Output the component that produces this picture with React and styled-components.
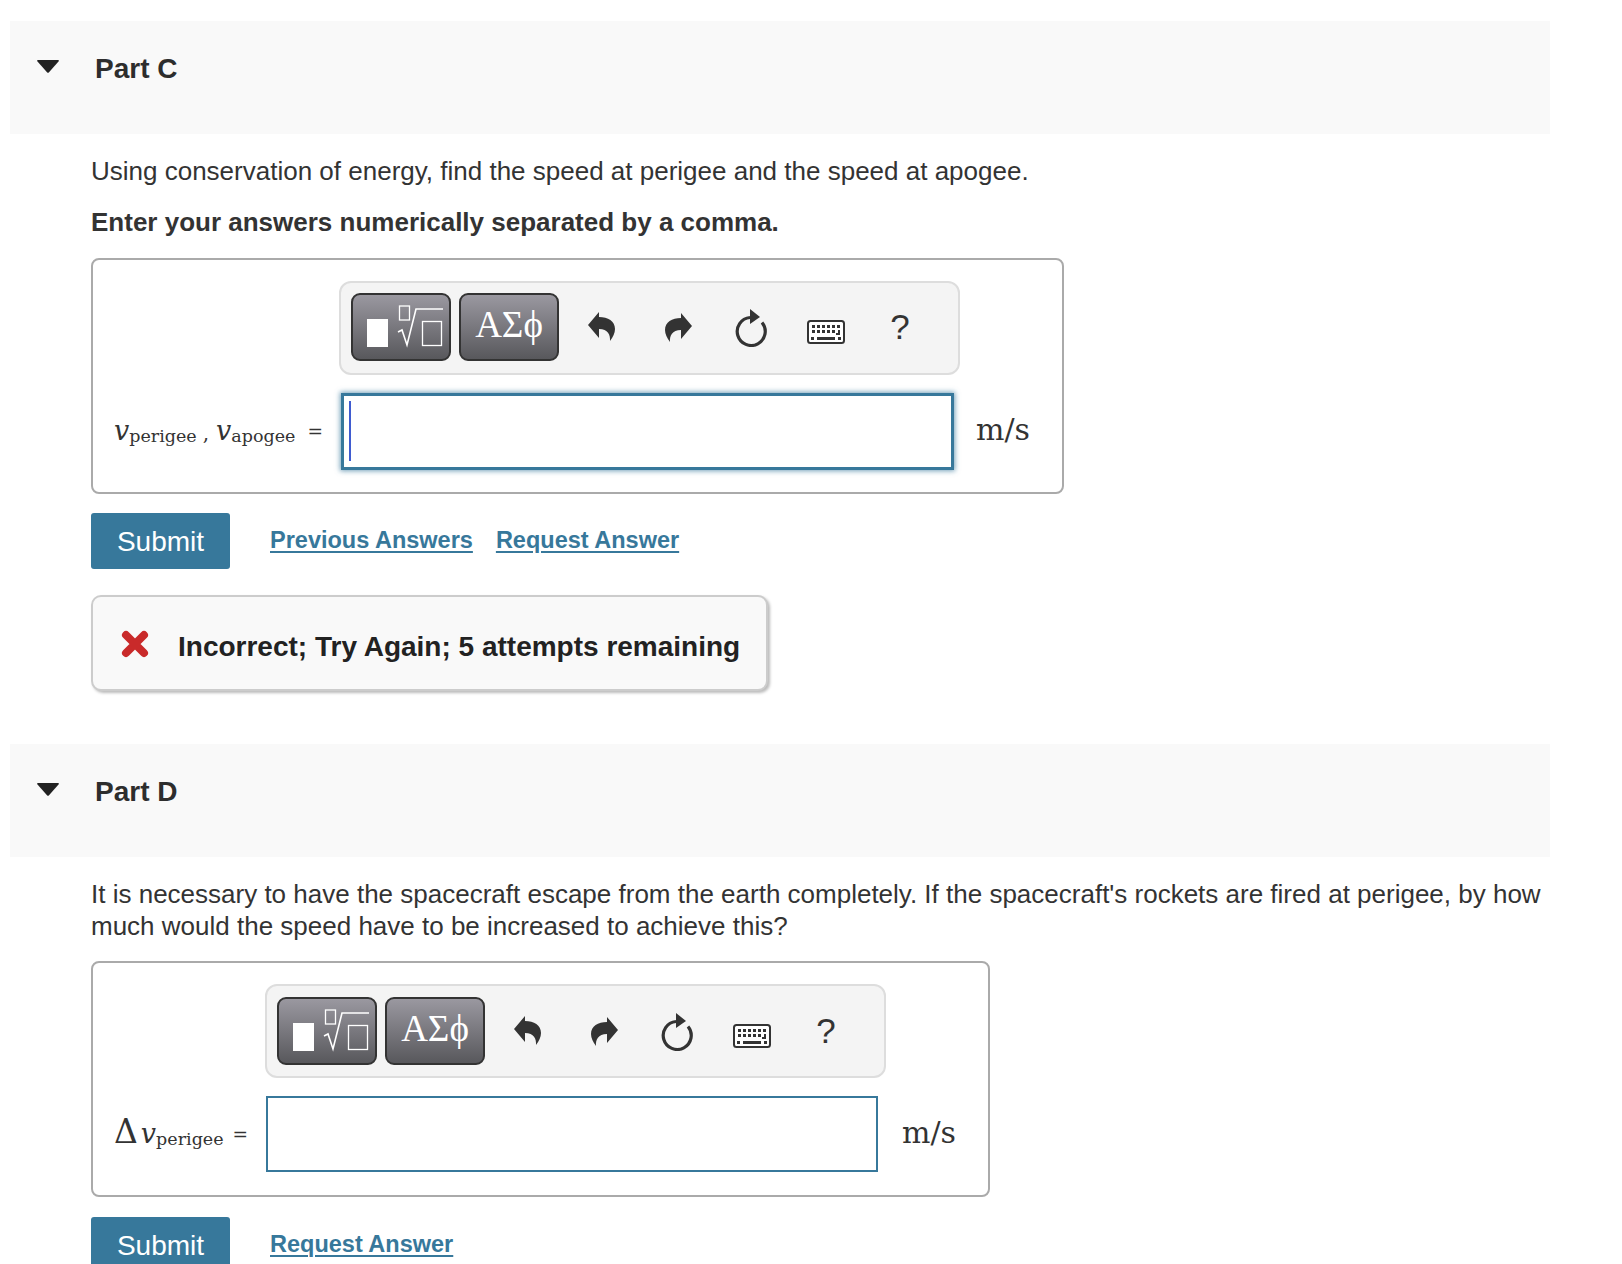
import React from 'react';
import styled, { createGlobalStyle } from 'styled-components';

const GlobalStyle = createGlobalStyle`
html, body {
  margin: 0;
  padding: 0;
  background: #fff;
  overflow: hidden;
}
body {
  font-family: 'Liberation Sans', Arial, sans-serif;
  color: #333;
}
`;

const Page = styled.div`
  width: 1540px;
  height: 1264px;
  margin-left: 10px;
  padding-top: 21px;
  box-sizing: border-box;
  overflow: hidden;
`;

const PartHeader = styled.div`
  display: flex;
  align-items: flex-start;
  height: 113px;
  background: #f9f9f9;
  box-sizing: border-box;
  padding: 32px 0 0 27px;
  margin-top: ${(p) => (p.$first ? '0' : '53px')};
`;

const CaretIcon = styled.svg`
  width: 22px;
  height: 13px;
  margin-top: 7px;
  fill: #222;
`;

const PartTitle = styled.h2`
  margin: 0 0 0 36px;
  font-size: 28px;
  line-height: 32px;
  font-weight: 700;
  color: #2d2d2d;
`;

const PartBody = styled.div`
  padding-left: 81px;
`;

const Prompt = styled.p`
  margin: 20.5px 0 0;
  font-size: 26px;
  line-height: 32px;
  color: #333;
`;

const Instruction = styled.p`
  margin: 20.5px 0 0;
  font-size: 26px;
  line-height: 31px;
  font-weight: 700;
  color: #333;
`;

const AnswerBox = styled.div`
  display: grid;
  grid-template-columns: ${(p) => p.$labelWidth}px ${(p) => p.$inputWidth}px auto;
  grid-template-rows: 94px 77px;
  row-gap: 18px;
  width: ${(p) => p.$width}px;
  height: 236px;
  margin-top: ${(p) => p.$top}px;
  box-sizing: border-box;
  border: 2px solid #aaa;
  border-radius: 8px;
  padding: 21px 0 0 21px;
`;

const Toolbar = styled.div`
  grid-column: 2 / 4;
  display: flex;
  align-items: center;
  width: 621px;
  height: 94px;
  margin-left: ${(p) => p.$offset}px;
  box-sizing: border-box;
  background: #f4f4f4;
  border: 2px solid #ddd;
  border-radius: 12px;
  padding: ${(p) => p.$drop}px 0 0 10px;
`;

const ToolButton = styled.div`
  display: flex;
  align-items: center;
  justify-content: center;
  width: 100px;
  height: 68px;
  margin-right: 8px;
  margin-bottom: 2px;
  box-sizing: border-box;
  border: 2px solid #333;
  border-radius: 9px;
  background: linear-gradient(#9a98a0, #58585c);
  color: #fff;
  font-family: 'Liberation Serif', serif;
  font-size: 37px;
  line-height: 1;
  padding-bottom: 6px;
  svg {
    margin: 6px 0 0 10px;
  }
`;

const IconSlot = styled.div`
  display: flex;
  align-items: center;
  justify-content: center;
  width: 74px;
  height: 68px;
  color: #333;
  font-size: 35px;
  padding-bottom: ${(p) => p.$lift || 0}px;
  padding-top: ${(p) => p.$drop || 0}px;
  padding-right: ${(p) => p.$nudge || 0}px;
  box-sizing: border-box;
  svg {
    display: block;
  }
`;

const MathLabel = styled.div`
  align-self: center;
  margin-top: ${(p) => p.$top}px;
  font-family: 'DejaVu Serif', serif;
  font-size: 18.5px;
  color: #333;
  white-space: nowrap;
`;

const MathVar = styled.i`
  font-size: 27px;
`;

const DeltaSign = styled.span`
  font-size: 33px;
  margin-right: 3px;
`;

const Subscript = styled.span`
  font-size: 17.5px;
  vertical-align: -2px;
`;

const Comma = styled.span`
  font-size: 20px;
  margin: 0 7px 0 6px;
`;

const Equals = styled.span`
  margin-left: ${(p) => p.$gap}px;
  vertical-align: 2px;
`;

const AnswerInput = styled.div`
  position: relative;
  height: ${(p) => (p.$focused ? '77px' : '76px')};
  box-sizing: border-box;
  background: #fff;
  border: ${(p) => (p.$focused ? '3px' : '2px')} solid #37789b;
  box-shadow: ${(p) => (p.$focused ? '0 0 5px 1px rgba(55, 120, 155, 0.7)' : 'none')};
`;

const Cursor = styled.span`
  position: absolute;
  left: 5px;
  top: 5px;
  width: 2px;
  height: 60px;
  background: #3f5bd0;
`;

const Unit = styled.div`
  align-self: center;
  margin: -4px 0 0 ${(p) => p.$gap}px;
  font-family: 'DejaVu Serif', serif;
  font-size: 30px;
  color: #333;
`;

const Actions = styled.div`
  display: flex;
  align-items: center;
  margin-top: ${(p) => p.$top}px;
`;

const SubmitButton = styled.button`
  width: 139px;
  height: 56px;
  border: 0;
  border-radius: 3px;
  background: #37789b;
  color: #fff;
  font-family: inherit;
  font-size: 28px;
  padding: 2px 0 0;
  margin-right: 16px;
`;

const ActionLink = styled.a`
  margin: 0 -1px 2px 24px;
  color: #37789b;
  font-size: 23.5px;
  font-weight: 700;
  text-decoration: underline;
  text-decoration-thickness: 2px;
  text-underline-offset: 3px;
`;

const Alert = styled.div`
  display: flex;
  align-items: center;
  width: 677px;
  height: 96px;
  margin-top: 26px;
  box-sizing: border-box;
  background: #f9f9f9;
  border: 2px solid #ccc;
  border-radius: 10px;
  box-shadow: 2px 2px 3px #bbb;
  padding-left: 28px;
`;

const AlertIcon = styled.svg`
  width: 28px;
  height: 28px;
  margin-top: 2px;
`;

const AlertText = styled.span`
  margin: 8px 0 0 29px;
  font-size: 28px;
  font-weight: 700;
  color: #222;
  white-space: nowrap;
`;

const Caret = () => (
  <CaretIcon viewBox="0 0 22 13">
    <path d="M1 0 H21 Q22.5 0 21.5 1.5 L12 12.2 Q11 13.2 10 12.2 L0.5 1.5 Q-0.5 0 1 0 Z" />
  </CaretIcon>
);

const MathIcon = () => (
  <svg width="78" height="44" viewBox="0 0 78 44">
    <rect x="0" y="14" width="21" height="28" fill="#fff" />
    <rect x="32.5" y="1" width="10" height="14" fill="none" stroke="#fff" strokeWidth="1.3" />
    <path d="M31 27 L35 25 L40 40 L49 4 H76" fill="none" stroke="#fff" strokeWidth="1.6" />
    <rect x="55.5" y="16.5" width="19" height="24" fill="none" stroke="#fff" strokeWidth="1.3" />
  </svg>
);

const ReplyIcon = styled.svg`
  transform: ${(p) => (p.$flip ? 'scaleX(-1)' : 'none')};
`;

const UndoIcon = ({ flip }) => (
  <ReplyIcon $flip={flip} width="28" height="31" viewBox="0 0 28 31" fill="#333">
    <path d="M0 14 L11 1 V6 C20 6 27 10 27 18 C27 22 25 26 22 30 C22.5 24 20 18 11 18 V27 Z" />
  </ReplyIcon>
);

const ResetIcon = () => (
  <svg width="34" height="38" viewBox="0 0 34 38">
    <path d="M27 13.5 A14 14 0 1 1 15 8.5" fill="none" stroke="#333" strokeWidth="3.2" />
    <path d="M15 0 L25 8 L15 15 Z" fill="#333" />
  </svg>
);

const keyRows = [
  [6, 11, 16, 21, 26, 31],
  [6, 11, 16, 21, 26],
];

const KeyboardIcon = () => (
  <svg width="38" height="24" viewBox="0 0 38 24">
    <rect x="1" y="1" width="36" height="22" rx="2.5" fill="#fff" stroke="#333" strokeWidth="2" />
    {keyRows.map((row, i) =>
      row.map((x) => <rect key={`${i}-${x}`} x={x - 1} y={5 + i * 5} width="3" height="3" fill="#333" />)
    )}
    <path d="M31 10 H33 V15 H29 V13 H31 Z" fill="#333" />
    <rect x="4" y="17" width="3" height="3" fill="#333" />
    <rect x="10" y="17" width="18" height="3" fill="#333" />
    <rect x="31" y="17" width="3" height="3" fill="#333" />
  </svg>
);

const CrossIcon = () => (
  <AlertIcon viewBox="0 0 28 28">
    <path d="M5 5 L23 23 M23 5 L5 23" stroke="#c92a2a" strokeWidth="8" strokeLinecap="round" />
  </AlertIcon>
);

const EditorToolbar = ({ offset, drop }) => (
  <Toolbar $offset={offset} $drop={drop}>
    <ToolButton><MathIcon /></ToolButton>
    <ToolButton>ΑΣϕ</ToolButton>
    <IconSlot $lift={4} $nudge={4}><UndoIcon /></IconSlot>
    <IconSlot $lift={2}><UndoIcon flip /></IconSlot>
    <IconSlot><ResetIcon /></IconSlot>
    <IconSlot $drop={8}><KeyboardIcon /></IconSlot>
    <IconSlot $lift={2}>?</IconSlot>
  </Toolbar>
);

export default function App() {
  return (
    <Page>
      <GlobalStyle />
      <PartHeader $first>
        <Caret />
        <PartTitle>Part C</PartTitle>
      </PartHeader>
      <PartBody>
        <Prompt>Using conservation of energy, find the speed at perigee and the speed at apogee.</Prompt>
        <Instruction>Enter your answers numerically separated by a comma.</Instruction>
        <AnswerBox $labelWidth={227} $inputWidth={613} $width={973} $top={20}>
          <EditorToolbar offset={-2} drop={0} />
          <MathLabel $top={-3}>
            <MathVar>v</MathVar><Subscript>perigee</Subscript><Comma>,</Comma><MathVar>v</MathVar><Subscript>apogee</Subscript>
            <Equals $gap={12}>=</Equals>
          </MathLabel>
          <AnswerInput $focused><Cursor /></AnswerInput>
          <Unit $gap={22}>m/s</Unit>
        </AnswerBox>
        <Actions $top={19}>
          <SubmitButton>Submit</SubmitButton>
          <ActionLink>Previous Answers</ActionLink>
          <ActionLink>Request Answer</ActionLink>
        </Actions>
        <Alert>
          <CrossIcon />
          <AlertText>Incorrect; Try Again; 5 attempts remaining</AlertText>
        </Alert>
      </PartBody>

      <PartHeader>
        <Caret />
        <PartTitle>Part D</PartTitle>
      </PartHeader>
      <PartBody>
        <Prompt>
          It is necessary to have the spacecraft escape from the earth completely. If the spacecraft's rockets are fired at perigee, by how much would the speed have to be increased to achieve this?
        </Prompt>
        <AnswerBox $labelWidth={152} $inputWidth={612} $width={899} $top={19.5}>
          <EditorToolbar offset={-1} drop={2} />
          <MathLabel $top={-6}>
            <DeltaSign>Δ</DeltaSign><MathVar>v</MathVar><Subscript>perigee</Subscript>
            <Equals $gap={9}>=</Equals>
          </MathLabel>
          <AnswerInput />
          <Unit $gap={24}>m/s</Unit>
        </AnswerBox>
        <Actions $top={20}>
          <SubmitButton>Submit</SubmitButton>
          <ActionLink>Request Answer</ActionLink>
        </Actions>
      </PartBody>
    </Page>
  );
}
